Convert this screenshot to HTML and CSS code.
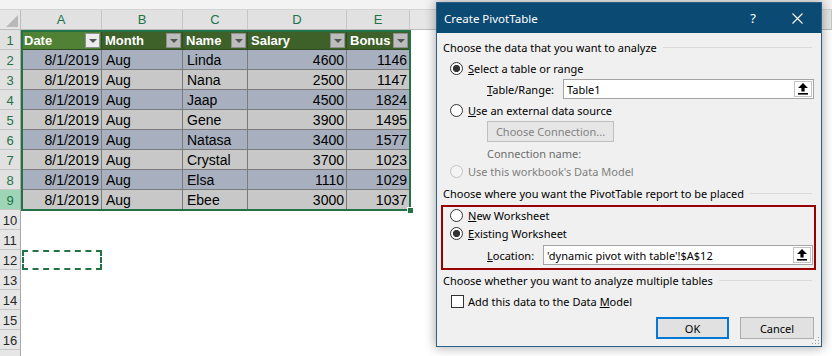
FILE: index.html
```html
<!DOCTYPE html>
<html lang="en">
<head>
  <meta charset="UTF-8">
  <title>Create PivotTable</title>
  <link rel="stylesheet" href="styles.css">
</head>
<body>
  <div class="topbar"></div>
  <div class="grid">
    <div class="corner"></div>
    <div class="colhead sel">A</div>
    <div class="colhead sel">B</div>
    <div class="colhead sel">C</div>
    <div class="colhead sel">D</div>
    <div class="colhead sel">E</div>
    <div class="colhead"></div>

    <div class="rowhead sel">1</div>
    <div class="cell th active">Date<span class="dd"></span></div>
    <div class="cell th">Month<span class="dd"></span></div>
    <div class="cell th">Name<span class="dd"></span></div>
    <div class="cell th">Salary<span class="dd"></span></div>
    <div class="cell th">Bonus<span class="dd"></span></div>
    <div class="blank"></div>

    <div class="rowhead sel">2</div>
    <div class="cell band num">8/1/2019</div><div class="cell band">Aug</div><div class="cell band">Linda</div><div class="cell band num">4600</div><div class="cell band num">1146</div>
    <div class="blank"></div>
    <div class="rowhead sel">3</div>
    <div class="cell num">8/1/2019</div><div class="cell">Aug</div><div class="cell">Nana</div><div class="cell num">2500</div><div class="cell num">1147</div>
    <div class="blank"></div>
    <div class="rowhead sel">4</div>
    <div class="cell band num">8/1/2019</div><div class="cell band">Aug</div><div class="cell band">Jaap</div><div class="cell band num">4500</div><div class="cell band num">1824</div>
    <div class="blank"></div>
    <div class="rowhead sel">5</div>
    <div class="cell num">8/1/2019</div><div class="cell">Aug</div><div class="cell">Gene</div><div class="cell num">3900</div><div class="cell num">1495</div>
    <div class="blank"></div>
    <div class="rowhead sel">6</div>
    <div class="cell band num">8/1/2019</div><div class="cell band">Aug</div><div class="cell band">Natasa</div><div class="cell band num">3400</div><div class="cell band num">1577</div>
    <div class="blank"></div>
    <div class="rowhead sel">7</div>
    <div class="cell num">8/1/2019</div><div class="cell">Aug</div><div class="cell">Crystal</div><div class="cell num">3700</div><div class="cell num">1023</div>
    <div class="blank"></div>
    <div class="rowhead sel">8</div>
    <div class="cell band num">8/1/2019</div><div class="cell band">Aug</div><div class="cell band">Elsa</div><div class="cell band num">1110</div><div class="cell band num">1029</div>
    <div class="blank"></div>
    <div class="rowhead sel cur">9</div>
    <div class="cell num">8/1/2019</div><div class="cell">Aug</div><div class="cell">Ebee</div><div class="cell num">3000</div><div class="cell num">1037</div>
    <div class="blank"></div>

    <div class="rowhead">10</div><div class="blank wide"></div>
    <div class="rowhead">11</div><div class="blank wide"></div>
    <div class="rowhead">12</div><div class="copy"></div><div class="blank rest"></div>
    <div class="rowhead">13</div><div class="blank wide"></div>
    <div class="rowhead">14</div><div class="blank wide"></div>
    <div class="rowhead">15</div><div class="blank wide"></div>
    <div class="rowhead">16</div><div class="blank wide"></div>
    <div class="rowhead"></div><div class="blank wide"></div>

    <!-- selection frame over A1:E9 -->
    <div class="selection"><span class="handle"></span></div>
  </div>

  <!-- dialog window floats over the sheet -->
  <div class="dialog">
    <div class="titlebar">
      <span class="title">Create PivotTable</span>
      <span class="help">?</span>
      <svg class="close" width="11" height="11" viewBox="0 0 11 11"><path d="M0.5 0.5L10.5 10.5M10.5 0.5L0.5 10.5" stroke="#fff" stroke-width="1.1"/></svg>
    </div>
    <div class="dlg-body">
      <div class="group"><span>Choose the data that you want to analyze</span></div>
      <div class="opt first"><span class="radio on"></span><span><u>S</u>elect a table or range</span></div>
      <div class="field">
        <span class="lbl range"><u>T</u>able/Range:</span>
        <div class="input range-box">Table1
          <span class="pick"><svg width="10" height="12" viewBox="0 0 10 12"><path d="M5 0L10 5H6.6V8.5H3.4V5H0Z" fill="#000"/><rect x="0" y="10" width="10" height="1.6" fill="#000"/></svg></span>
        </div>
      </div>
      <div class="opt"><span class="radio"></span><span><u>U</u>se an external data source</span></div>
      <div class="btn-off">Choose Connection...</div>
      <div class="conn">Connection name:</div>
      <div class="opt off"><span class="radio"></span><span>Use this workbook's Data Model</span></div>

      <div class="group second"><span>Choose where you want the PivotTable report to be placed</span></div>
      <div class="placement">
        <div class="opt short"><span class="radio"></span><span><u>N</u>ew Worksheet</span></div>
        <div class="opt short gap"><span class="radio on"></span><span><u>E</u>xisting Worksheet</span></div>
        <div class="field loc">
          <span class="lbl location"><u>L</u>ocation:</span>
          <div class="input loc-box">'dynamic pivot with table'!$A$12
            <span class="pick"><svg width="10" height="12" viewBox="0 0 10 12"><path d="M5 0L10 5H6.6V8.5H3.4V5H0Z" fill="#000"/><rect x="0" y="10" width="10" height="1.6" fill="#000"/></svg></span>
          </div>
        </div>
      </div>

      <div class="group third"><span>Choose whether you want to analyze multiple tables</span></div>
      <div class="opt check-row"><span class="check"></span><span>Add this data to the Data <u>M</u>odel</span></div>
      <div class="actions">
        <button class="ok">OK</button>
        <button>Cancel</button>
      </div>
    </div>
    <svg class="grip" width="10" height="10" viewBox="0 0 10 10">
      <rect x="8" y="2" width="1" height="1" fill="#9a9a9a"/>
      <rect x="5" y="5" width="1" height="1" fill="#9a9a9a"/><rect x="8" y="5" width="1" height="1" fill="#9a9a9a"/>
      <rect x="2" y="8" width="1" height="1" fill="#9a9a9a"/><rect x="5" y="8" width="1" height="1" fill="#9a9a9a"/><rect x="8" y="8" width="1" height="1" fill="#9a9a9a"/>
    </svg>
  </div>
</body>
</html>
```

FILE: styles.css
```css
/* page = one excel window, dialog on top */
body {
  margin: 0;
  width: 832px;
  height: 356px;
  overflow: hidden;
  position: relative;
  background: #fff;
  font-family: "Liberation Sans", Arial, sans-serif;
}

.topbar {
  height: 10px;
  background: #f3f3f3;
  border-bottom: 1px solid #d4d4d4;
  box-sizing: border-box;
}

/* sheet grid */
.grid {
  display: grid;
  grid-template-columns: 21px 81px 81px 65px 99px 63px 1fr;
  grid-auto-rows: 20px;
  font-size: 14px;
  color: #000;
  position: relative;
}
.grid > div {
  box-sizing: border-box;
}

.corner {
  background: #e6e6e6;
  border-right: 1px solid #bcbcbc;
  border-bottom: 1px solid #bcbcbc;
  display: flex;
  justify-content: flex-end;
  align-items: flex-end;
  padding: 0 2px 2px 0;
}
.corner::after {
  content: "";
  width: 0;
  height: 0;
  border-left: 12px solid transparent;
  border-bottom: 12px solid #b9b9b9;
}

.colhead {
  background: #e6e6e6;
  border-right: 1px solid #c6c6c6;
  border-bottom: 1px solid #bcbcbc;
  text-align: center;
  font-size: 13px;
  line-height: 20px;
  color: #444;
}
.colhead.sel {
  background: #e1e1e1;
  color: #217346;
}

.rowhead {
  background: #e6e6e6;
  border-right: 1px solid #a8a8a8;
  border-bottom: 1px solid #c6c6c6;
  text-align: center;
  font-size: 13px;
  line-height: 21px;
  color: #262626;
}
.rowhead.sel {
  background: #e1e1e1;
  color: #217346;
}
.rowhead.cur {
  background: #9fd5b7;
}

.cell {
  background: #c8c8c8;
  border-right: 1px solid #7b7b7b;
  border-bottom: 1px solid #7b7b7b;
  padding: 0 3px 0 4px;
  line-height: 21px;
  white-space: nowrap;
  overflow: hidden;
}
.cell.band {
  background: #a8b0bf;
}
.cell.num {
  text-align: right;
  padding-right: 2px;
}

.cell.th {
  background: #3d6129;
  color: #fff;
  font-weight: bold;
  font-size: 13px;
  display: flex;
  justify-content: space-between;
  align-items: flex-start;
  padding-left: 3px;
  padding-right: 1px;
  border-right: 1px solid #2f4c20;
  border-bottom: 1px solid #2f4c20;
}
.cell.th.active {
  background: #518134;
}

/* filter dropdown buttons */
.dd {
  width: 15px;
  height: 15px;
  margin-top: 3px;
  flex: none;
  box-sizing: border-box;
  border: 1px solid #8f8f8f;
  background: #bdbdbd;
  display: flex;
  justify-content: center;
  align-items: center;
}
.active .dd {
  background: #ececec;
}
.dd::after {
  content: "";
  border-left: 4px solid transparent;
  border-right: 4px solid transparent;
  border-top: 4px solid #555;
}

.blank {
  background: #fff;
}
.blank.wide {
  grid-column: span 6;
}
.blank.rest {
  grid-column: span 5;
}

/* marching ants on A12 */
.copy {
  margin-left: 1px;
  border: 2px dashed #217346;
}

/* selection A1:E9, sits on top of the cells */
.selection {
  position: absolute;
  grid-column: 2 / 7;
  grid-row: 2 / 11;
  top: 0;
  left: 0;
  right: -1px;
  bottom: -1px;
  border: 2px solid #217346;
  pointer-events: none;
}
.handle {
  position: absolute;
  right: -5px;
  bottom: -5px;
  width: 5px;
  height: 5px;
  background: #217346;
  border: 1px solid #fff;
}

/* Create PivotTable dialog */
.dialog {
  position: absolute;
  left: 436px;
  top: 2px;
  width: 386px;
  box-sizing: border-box;
  border: 1px solid #2e5f85;
  background: #f0f0f0;
  box-shadow: 0 0 10px 1px rgba(0, 0, 0, 0.32);
  font-family: "Noto Sans", "Liberation Sans", sans-serif;
  font-size: 11px;
  color: #000;
}

.titlebar {
  height: 30px;
  background: #0b4a72;
  color: #fff;
  display: flex;
  align-items: center;
  padding-left: 7px;
  font-size: 11.5px;
}
.title {
  flex: 1;
}
.help {
  font-size: 13px;
  margin-right: 36px;
}
.close {
  margin-right: 18px;
}

.dlg-body {
  padding: 6px 9px 7px 6px;
}

.group {
  display: flex;
  align-items: center;
  height: 16px;
  white-space: nowrap;
}
.group::after {
  content: "";
  flex: 1;
  height: 1px;
  background: #dadada;
  margin-left: 6px;
}
.group.second {
  margin-top: 6px;
}
.group.third {
  margin-top: 2px;
}

.opt {
  display: flex;
  align-items: center;
  height: 20px;
  margin-top: 1px;
  padding-left: 7px;
  white-space: nowrap;
}
.opt.first {
  margin-top: 3px;
}
.opt.off {
  height: 16px;
  margin-top: 0;
  color: #7f7f7f;
}
.opt.short {
  height: 17px;
  margin-top: 0;
}
.opt.short.gap {
  margin-top: 1px;
}

.radio {
  width: 13px;
  height: 13px;
  box-sizing: border-box;
  border: 1px solid #333;
  border-radius: 50%;
  background: #fff;
  margin-right: 5px;
  flex: none;
}
.radio.on {
  background: radial-gradient(circle, #333 0 3.3px, #fff 3.9px);
}
.opt.off .radio {
  border-color: #c2c2c2;
  background: #f4f4f4;
}

.field {
  display: flex;
  align-items: center;
  height: 20px;
  margin-top: 1px;
}
.lbl {
  margin-left: 44px;
  flex: none;
}
.lbl.range {
  width: 76px;
}
.lbl.location {
  width: 56px;
}
.input {
  height: 20px;
  box-sizing: border-box;
  border: 1px solid #a5a5a5;
  background: #fff;
  display: flex;
  align-items: center;
  justify-content: space-between;
  padding-left: 3px;
  flex: none;
}
.range-box {
  width: 251px;
}
.loc-box {
  width: 270px;
}
.pick {
  width: 18px;
  height: 16px;
  margin-right: 1px;
  box-sizing: border-box;
  border: 1px solid #c4c4c4;
  background: #fff;
  display: flex;
  justify-content: center;
  align-items: center;
}

.btn-off {
  width: 127px;
  height: 21px;
  margin: 1px 0 0 44px;
  box-sizing: border-box;
  border: 1px solid #bfbfbf;
  background: #e6e6e6;
  color: #838383;
  display: flex;
  justify-content: center;
  align-items: center;
}
.conn {
  margin: 3px 0 0 44px;
  height: 18px;
  line-height: 18px;
  color: #6d6d6d;
}

.placement {
  margin: 4px -4px 0 -2px;
  border: 2px solid #990000;
  padding-bottom: 3px;
}
.field.loc {
  margin-top: 3px;
}

.check-row {
  height: 16px;
  margin-top: 5px;
  padding-left: 8px;
}
.check {
  width: 13px;
  height: 13px;
  box-sizing: border-box;
  border: 1px solid #333;
  background: #fff;
  margin-right: 4px;
  flex: none;
}

.actions {
  display: flex;
  justify-content: flex-end;
  gap: 11px;
  margin: 8px -2px 0 0;
}
button {
  height: 22px;
  width: 74px;
  box-sizing: border-box;
  border: 1px solid #adadad;
  background: #e1e1e1;
  font-family: "Noto Sans", "Liberation Sans", sans-serif;
  font-size: 11px;
  color: #000;
  padding: 0;
}
button.ok {
  width: 73px;
  border: 2px solid #0078d7;
}

.grip {
  position: absolute;
  right: 1px;
  bottom: 1px;
}
```
